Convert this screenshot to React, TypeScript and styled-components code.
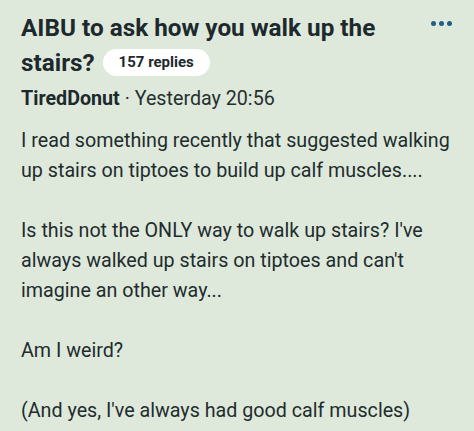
import React from "react";
import styled, { createGlobalStyle } from "styled-components";

const GlobalStyle = createGlobalStyle`
  html, body {
    margin: 0;
    padding: 0;
    background: #dee9dc;
  }
  body {
    font-family: Roboto, "Noto Sans", sans-serif;
    color: #1f2b2c;
  }
`;

const Thread = styled.article`
  width: 474px;
  height: 431px;
  box-sizing: border-box;
  padding: 10px 20px 0 21px;
  background: #dee9dc;
  overflow: hidden;
`;

const Header = styled.div`
  display: flex;
  align-items: flex-start;
  justify-content: space-between;
`;

const Title = styled.h1`
  margin: 0;
  font-size: 24.3px;
  font-weight: 700;
  line-height: 35px;
  color: #1d292c;
  max-width: 385px;
`;

const Replies = styled.span`
  display: inline-flex;
  align-items: center;
  height: 27px;
  padding: 0 16px;
  margin-left: 8px;
  border-radius: 14px;
  background: #ffffff;
  font-size: 15px;
  font-weight: 700;
  color: #1d292c;
  vertical-align: middle;
  position: relative;
  top: -2px;
`;

const MenuButton = styled.button`
  display: flex;
  gap: 3px;
  margin: 11px 2px 0 0;
  padding: 0;
  border: 0;
  background: none;
  cursor: pointer;
`;

const Dot = styled.span`
  width: 5px;
  height: 5px;
  border-radius: 50%;
  background: #1f5f86;
`;

const Meta = styled.div`
  margin-top: 7px;
  font-size: 19.7px;
  line-height: 24px;
  color: #26302f;
`;

const Author = styled.span`
  font-weight: 700;
  color: #1d292c;
`;

const Body = styled.div`
  margin-top: 15px;
  font-size: 19.7px;
  line-height: 30px;
  color: #222c2c;
`;

const Paragraph = styled.p`
  margin: 0 0 30px;
`;

const App: React.FC = () => {
  return (
    <>
      <GlobalStyle />
      <Thread>
        <Header>
          <Title>
            AIBU to ask how you walk up the stairs?
            <Replies>157 replies</Replies>
          </Title>
          <MenuButton aria-label="More options">
            <Dot />
            <Dot />
            <Dot />
          </MenuButton>
        </Header>
        <Meta>
          <Author>TiredDonut</Author> · Yesterday 20:56
        </Meta>
        <Body>
          <Paragraph>
            I read something recently that suggested walking up stairs on
            tiptoes to build up calf muscles....
          </Paragraph>
          <Paragraph>
            Is this not the ONLY way to walk up stairs? I've always walked up
            stairs on tiptoes and can't imagine an other way...
          </Paragraph>
          <Paragraph>Am I weird?</Paragraph>
          <Paragraph>(And yes, I've always had good calf muscles)</Paragraph>
        </Body>
      </Thread>
    </>
  );
};

export default App;
